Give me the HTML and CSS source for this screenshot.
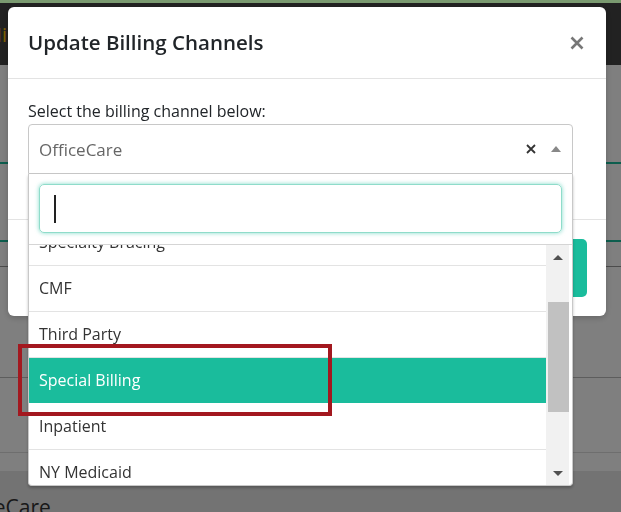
FILE: index.html
```html
<!DOCTYPE html>
<html lang="en">
<head>
    <meta charset="UTF-8">
    <meta name="viewport" content="width=device-width, initial-scale=1.0">
    <title>Billing Channels</title>
    <link rel="stylesheet" href="styles.css">
</head>
<body>
    <div class="pace-bar"></div>
    <div class="page">
        <nav class="navbar"><span class="brand">Mi</span></nav>
        <div class="content">
            <div class="panel"></div>
            <div class="tab-row"></div>
            <div class="tab-row short"></div>
            <div class="table-row tall"></div>
            <div class="table-row"></div>
            <div class="table-row last"></div>
            <div class="section">
                <h3 class="section-title">OfficeCare</h3>
            </div>
        </div>
    </div>

    <div class="modal-backdrop"></div>
    <div class="modal">
        <div class="modal-dialog">
            <div class="modal-header">
                <h4 class="modal-title">Update Billing Channels</h4>
                <button class="close">
                    <svg width="14" height="14" viewBox="0 0 14 14"><path d="M1.5 1.5L12.5 12.5M12.5 1.5L1.5 12.5" stroke="#777" stroke-width="2.6"/></svg>
                </button>
            </div>
            <div class="modal-body">
                <label class="field-label">Select the billing channel below:</label>
                <div class="select">
                    <div class="select-box">
                        <span class="select-value">OfficeCare</span>
                        <span class="select-clear">
                            <svg width="10" height="10" viewBox="0 0 10 10"><path d="M1 1L9 9M9 1L1 9" stroke="#333" stroke-width="1.8"/></svg>
                        </span>
                        <span class="select-arrow"></span>
                    </div>
                    <div class="select-dropdown">
                        <div class="search-wrap">
                            <div class="search"><span class="caret"></span></div>
                        </div>
                        <div class="results">
                            <ul class="options">
                                <li>Specialty Bracing</li>
                                <li>CMF</li>
                                <li>Third Party</li>
                                <li class="active">Special Billing</li>
                                <li>Inpatient</li>
                                <li>NY Medicaid</li>
                            </ul>
                            <div class="scrollbar">
                                <div class="scroll-btn"><span class="tri-up"></span></div>
                                <div class="scroll-track"><div class="scroll-thumb"></div></div>
                                <div class="scroll-btn"><span class="tri-down"></span></div>
                            </div>
                        </div>
                    </div>
                </div>
            </div>
            <div class="modal-footer">
                <button class="btn-save">Save</button>
            </div>
        </div>
    </div>

    <div class="highlight-box"></div>
</body>
</html>
```

FILE: styles.css
```css
html, body {
    height: 512px;
    overflow: hidden;
}
body {
    font-family: "Open Sans", "Noto Sans", Arial, sans-serif;
    margin: 0;
    padding: 0;
    background-color: #fff;
}
.pace-bar {
    position: fixed;
    top: 0;
    left: 0;
    right: 0;
    height: 3px;
    background: #7a9a70;
    z-index: 1001;
}
.page {
    padding-top: 3px;
}
.navbar {
    height: 62px;
    background: #444;
    display: flex;
    align-items: center;
}
.brand {
    color: #ffc107;
    font-size: 20px;
    margin-left: -16px;
}
.panel {
    height: 97px;
    border-bottom: 2px solid #1abc9c;
}
.tab-row {
    height: 76px;
    border-bottom: 2px solid #1abc9c;
}
.tab-row.short {
    height: 24px;
    border-bottom: 1px solid #999;
}
.table-row {
    height: 74px;
    border-bottom: 1px solid #ddd;
}
.table-row.tall {
    height: 110px;
    border-bottom-color: #bbb;
}
.table-row.last {
    height: 18px;
    border-bottom: none;
}
.section {
    background: #e6e6e6;
    padding-top: 22px;
    height: 40px;
    overflow: hidden;
}
.section-title {
    margin: 0 0 0 -52px;
    font-size: 21px;
    font-weight: 400;
    color: #333;
}
.modal-backdrop {
    position: fixed;
    z-index: 1000;
    left: 0;
    top: 0;
    width: 100%;
    height: 100%;
    background: rgba(0, 0, 0, 0.5);
}
.modal {
    position: fixed;
    z-index: 1000;
    left: 0;
    top: 0;
    width: 100%;
    height: 100%;
    padding: 7px 0 0 8px;
    box-sizing: border-box;
}
.modal-dialog {
    width: 598px;
    background: #fff;
    border-radius: 6px;
    box-shadow: 0 2px 6px rgba(0, 0, 0, 0.2);
}
.modal-header {
    display: flex;
    align-items: center;
    justify-content: space-between;
    padding: 20px 22px 20px 20px;
    border-bottom: 1px solid #e3e3e3;
}
.modal-title {
    margin: 0;
    font-size: 20.5px;
    font-weight: 600;
    line-height: 31px;
    color: #212529;
}
.close {
    border: none;
    background: none;
    padding: 0;
    width: 14px;
    height: 14px;
    display: flex;
}
.modal-body {
    padding: 20px;
}
.field-label {
    display: block;
    font-size: 16px;
    line-height: 24px;
    color: #212529;
    margin-bottom: 1px;
}
.select {
    position: relative;
    width: 545px;
    margin-bottom: 25px;
}
.select-box {
    height: 50px;
    box-sizing: border-box;
    border: 1px solid #c8c8c8;
    border-radius: 4px 4px 0 0;
    display: flex;
    align-items: center;
    padding: 0 11px 0 10px;
}
.select-value {
    flex: 1;
    font-size: 17px;
    color: #666;
}
.select-clear {
    display: flex;
    margin-right: 15px;
}
.select-arrow {
    width: 0;
    height: 0;
    border-left: 5px solid transparent;
    border-right: 5px solid transparent;
    border-bottom: 6px solid #888;
}
.select-dropdown {
    position: absolute;
    top: 100%;
    left: 0;
    right: 0;
    z-index: 10;
    background: #fff;
    border: 1px solid #c8c8c8;
    border-top: none;
    border-radius: 0 0 4px 4px;
    box-shadow: 0 2px 3px rgba(0, 0, 0, 0.25);
}
.search-wrap {
    padding: 10px 10px 11px 10px;
    border-bottom: 1px solid #d5d5d5;
}
.search {
    height: 49px;
    box-sizing: border-box;
    border: 1px solid #8fdcca;
    border-radius: 5px;
    box-shadow: 0 0 4px rgba(26, 188, 156, 0.55);
    display: flex;
    align-items: center;
    padding-left: 14px;
}
.caret {
    width: 2px;
    height: 28px;
    background: #222;
}
.results {
    height: 240px;
    display: flex;
    overflow: hidden;
}
.options {
    list-style: none;
    margin: -25px 0 0 0;
    padding: 0;
    flex: 1;
}
.options li {
    height: 45px;
    line-height: 45px;
    border-bottom: 1px solid #e3e3e3;
    padding-left: 10px;
    font-size: 16px;
    color: #333;
}
.options li.active {
    background: #1abc9c;
    color: #fff;
    border-bottom-color: #fff;
}
.scrollbar {
    width: 23px;
    margin-right: 3px;
    background: #f1f1f1;
    display: flex;
    flex-direction: column;
}
.scroll-btn {
    height: 24px;
    display: flex;
    align-items: center;
    justify-content: center;
}
.tri-up, .tri-down {
    width: 0;
    height: 0;
    border-left: 5.5px solid transparent;
    border-right: 5.5px solid transparent;
}
.tri-up {
    border-bottom: 5px solid #505050;
}
.tri-down {
    border-top: 5px solid #505050;
}
.scroll-track {
    flex: 1;
}
.scroll-thumb {
    margin: 33px 0 0 2px;
    height: 110px;
    background: #c1c1c1;
}
.modal-footer {
    border-top: 1px solid #e3e3e3;
    padding: 19px 19px 19px 20px;
    display: flex;
    justify-content: flex-end;
}
.btn-save {
    height: 58px;
    padding: 0 24px;
    border: none;
    border-radius: 5px;
    background: #1abc9c;
    color: #fff;
    font-size: 16px;
    font-family: inherit;
}
.highlight-box {
    position: fixed;
    z-index: 1002;
    left: 18px;
    top: 344px;
    width: 314px;
    height: 72px;
    box-sizing: border-box;
    border: 4px solid #a3181f;
}
```
